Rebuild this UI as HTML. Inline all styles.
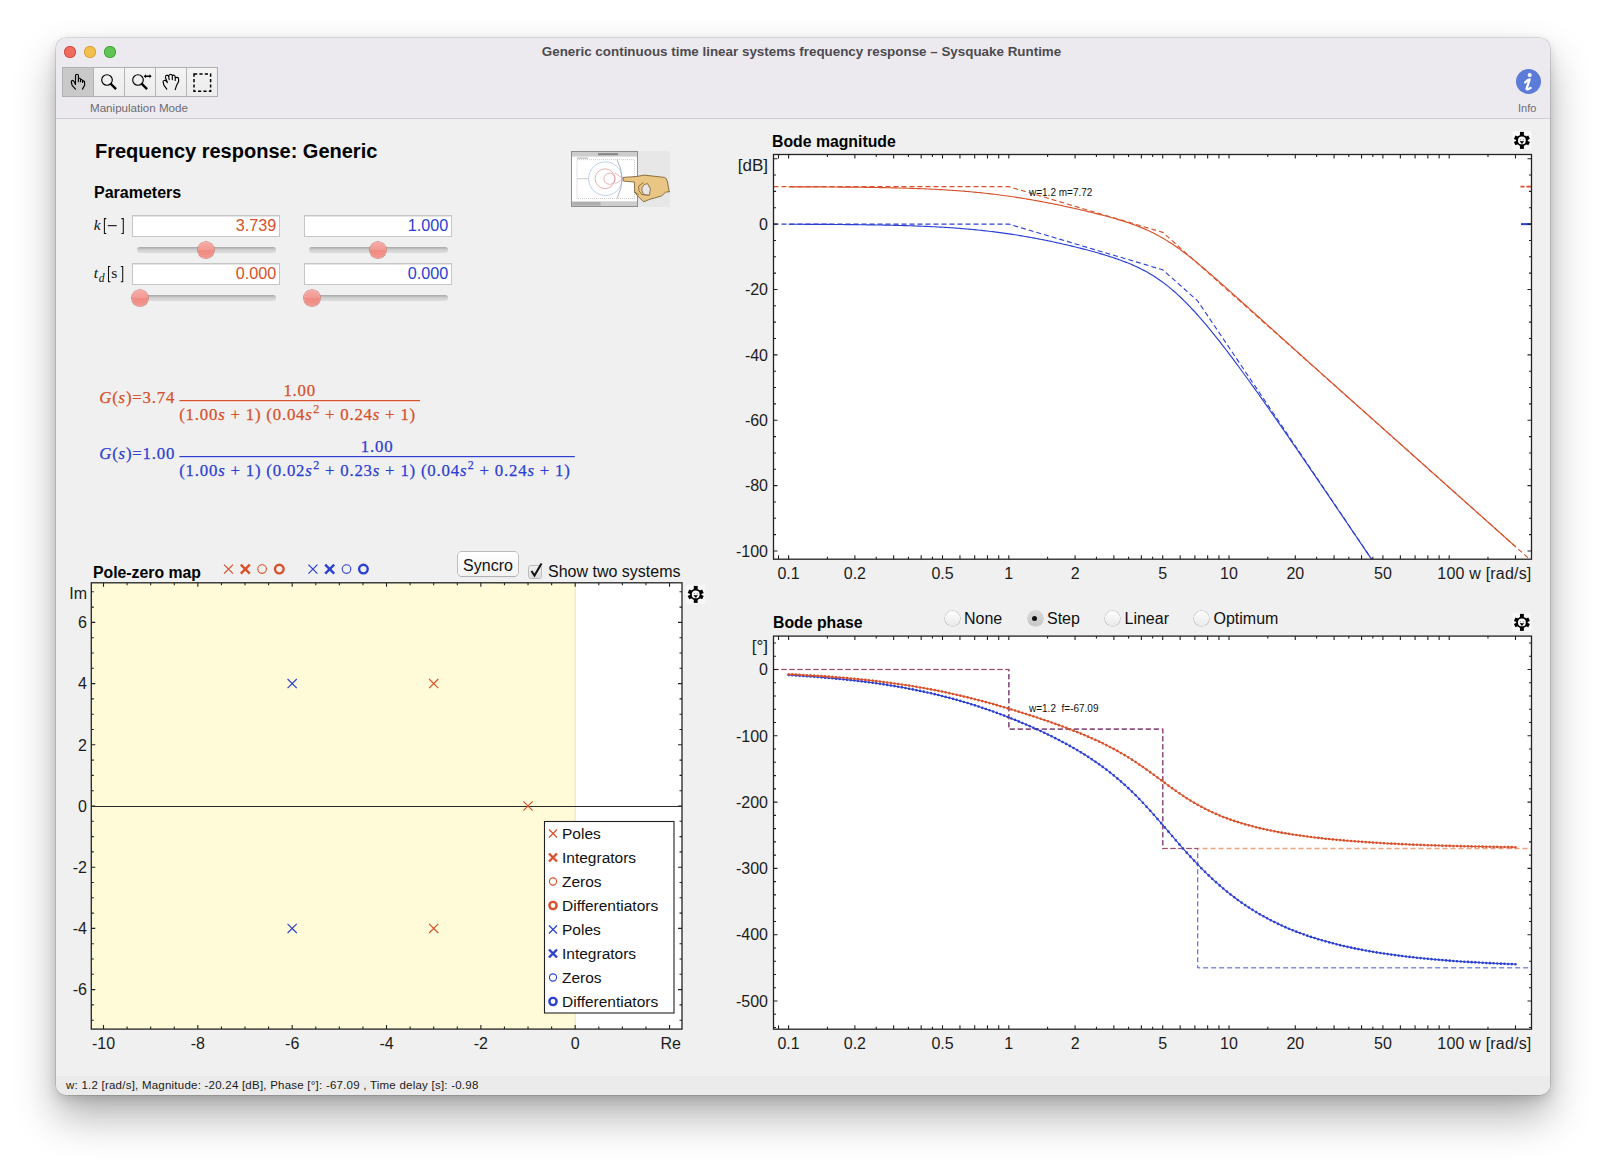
<!DOCTYPE html>
<html><head><meta charset="utf-8"><style>
html,body{margin:0;padding:0}
body{width:1606px;height:1169px;position:relative;overflow:hidden;background:#fff;font-family:"Liberation Sans",sans-serif}
.a{position:absolute;white-space:nowrap}
#win{position:absolute;left:56px;top:38px;width:1494px;height:1057px;border-radius:10px;background:#f0f0f0;overflow:hidden;
 box-shadow:0 0 0 0.5px rgba(0,0,0,0.22),0 22px 42px rgba(0,0,0,0.30),0 6px 14px rgba(0,0,0,0.10),0 2px 10px rgba(0,0,0,0.06)}
#tb{position:absolute;left:0;top:0;width:1494px;height:80px;background:#eceaef;border-bottom:1px solid #cfcdd2}
#status{position:absolute;left:0;top:1037px;width:1494px;height:20px;background:#ebebeb;box-shadow:inset 0 1px 0 #f2f2f2}
.tl{position:absolute;top:8px;width:12px;height:12px;border-radius:50%}
.btn{position:absolute;top:30.2px;height:27.4px;width:30.1px;background:linear-gradient(#f4f4f4,#ececec);border-right:1px solid #b4b4b4}
.inp{position:absolute;height:20px;width:146px;background:#fff;border:1px solid #c6c6c6;box-shadow:inset 0 1px 0 #e4e4e4}
.inp span{position:absolute;right:2.8px;top:0.1px;font-size:16.2px;line-height:19px}
.trk{position:absolute;height:5.3px;border-radius:3px;background:linear-gradient(#a8a8a8 0,#b4b4b4 18%,#d0d0d0 45%,#dedede 100%)}
.knob{position:absolute;width:15.5px;height:15.5px;border-radius:50%;background:linear-gradient(#f7aaa5 0,#f39a94 48%,#ef8a82 52%,#f4968f 100%);box-shadow:0 0 0 0.8px #c98078}
.radio{position:absolute;top:611px;width:15px;height:15px;border-radius:50%;background:linear-gradient(#fdfdfd,#eaeaea);box-shadow:0 0 0 0.6px #b5b5b5}
.ser{font-family:"Liberation Serif",serif}
</style></head><body>
<div id="win">
 <div id="tb">
  <div class="tl" style="left:8px;background:#ee6b5e;box-shadow:inset 0 0 0 0.8px #c54a3f"></div>
  <div class="tl" style="left:28px;background:#f5bf4f;box-shadow:inset 0 0 0 0.8px #cf992f"></div>
  <div class="tl" style="left:48px;background:#5ec453;box-shadow:inset 0 0 0 0.8px #3f9a36"></div>
  <div class="a" style="left:-1.5px;width:1494px;top:5.8px;text-align:center;font-size:13.4px;font-weight:bold;color:#4c4a4f;line-height:16px">Generic continuous time linear systems frequency response – Sysquake Runtime</div>
  <div style="position:absolute;left:6px;top:29.2px;width:153.8px;height:27.4px;border:1px solid #b0b0b0;background:#ededed"></div>
  <div class="btn" style="left:7px;background:#c9c9c9"></div>
  <div class="btn" style="left:38.1px"></div>
  <div class="btn" style="left:69.2px"></div>
  <div class="btn" style="left:100.3px"></div>
  <div class="btn" style="left:131.4px;border-right:none;width:28.4px"></div>
  <div class="a" style="left:34px;top:63px;font-size:11.6px;color:#6c6a70;line-height:14px">Manipulation Mode</div>
  <div style="position:absolute;left:1459.6px;top:30.5px;width:25.8px;height:25.8px;border-radius:50%;background:#5b7bd8"></div>
  <svg class="a" style="left:1459.6px;top:30.5px" width="26" height="26" viewBox="1515.6 68.5 26 26"><circle cx="1529.3" cy="74.6" r="2.05" fill="#fff"/><path d="M1524.8 82 Q1527.2 79.2 1529.3 78.9 L1526.1 88.3 Q1526.8 89.8 1530.2 87.4" fill="none" stroke="#fff" stroke-width="2.3" stroke-linecap="round" stroke-linejoin="round"/></svg>
  <div class="a" style="left:1462px;top:64px;font-size:11px;color:#6c6a70;line-height:13px">Info</div>
 </div>
 <div id="status"><div class="a" style="left:10px;top:3px;font-size:11.5px;color:#1a1a1a;line-height:14px;letter-spacing:0.23px">w: 1.2 [rad/s], Magnitude: -20.24 [dB], Phase [°]: -67.09 , Time delay [s]: -0.98</div></div>
</div>
<!-- toolbar icons -->
<svg class="a" style="left:0;top:0" width="1606" height="169" viewBox="0 0 1606 169">
 <g fill="none" stroke="#000" stroke-width="1.15" stroke-linecap="round" stroke-linejoin="round">
  <path d="M75.5 84.5 V75.4 Q75.5 74.2 76.95 74.2 Q78.4 74.2 78.4 75.4 V81.7 M78.4 78.1 L80 78.3 Q80.5 78.6 80.5 79.5 V81.7 M80.5 79.3 L82.2 79.8 Q82.5 80.1 82.5 81 V82.4 M82.5 80.6 L84 81.1 Q84.6 81.5 84.6 82.6 V85.3 L82.5 89.1 M75.5 84.5 L74.3 82 Q73.3 80.4 72.6 80.4 Q71.2 80.6 71.3 81.8 L72.1 85.3 L75.5 89.1"/>
  <circle cx="107" cy="80" r="5.3"/>
  <path d="M110.3 83.4 L116.1 89.1" stroke-width="2.3" stroke-linecap="butt"/>
  <circle cx="138" cy="80" r="5.3"/>
  <path d="M141.3 83.4 L147.1 89.1" stroke-width="2.3" stroke-linecap="butt"/>
  <path d="M145.2 76.3 H150.2" stroke-width="1.5"/>
  <path transform="translate(0.8 0)" d="M166 89.1 L163.2 85.3 L162.3 82 Q162.2 80.7 163.2 80.5 Q164.8 80.2 165.8 81.5 L166.6 82.6 M166.4 82 L164.6 77.5 Q164.5 75.4 165.9 75.2 Q167.4 75.1 167.8 76.5 L168.4 79.6 M167.9 76.5 Q168.2 74.2 169.9 74.2 Q171.5 74.3 171.5 76 V79.6 M171.5 75.8 Q172.2 74.9 173.3 75.3 Q174.4 75.8 174.4 77 V80.5 M174.4 78 Q175.5 77.2 176.6 77.4 Q177.8 77.8 177.8 79.2 V81.5 L175.6 85.8 L174.4 89.6"/>
 </g>
 <path d="M143.8 76.3 L146 74.3 V78.3 Z M151.6 76.3 L149.4 74.3 V78.3 Z" fill="#000"/>
 <rect x="194" y="74" width="16.6" height="17.2" fill="none" stroke="#000" stroke-width="1.5" stroke-dasharray="3.2 2.2"/>
</svg>
<!-- main content -->
<div class="a" style="left:95px;top:140px;font-size:20px;font-weight:bold;color:#000;line-height:22px">Frequency response: Generic</div>
<div class="a" style="left:94px;top:184.4px;font-size:16px;font-weight:bold;color:#000;line-height:18px">Parameters</div>
<svg class="a" style="left:0;top:200px" width="140" height="100" viewBox="0 200 140 100" font-family="Liberation Serif, serif" fill="#111">
 <text x="93.8" y="229.8" font-size="15.5" font-style="italic">k</text>
 <path d="M106.3 218.6 H104.4 V233.4 H106.3 M121.4 218.6 H123.3 V233.4 H121.4" fill="none" stroke="#111" stroke-width="1.05"/>
 <rect x="107.8" y="225.1" width="8.9" height="1.1"/>
 <text x="93.8" y="277.8" font-size="15.5" font-style="italic">t</text>
 <text x="98.8" y="282.4" font-size="11.7" font-style="italic">d</text>
 <path d="M110.4 266.5 H108.5 V281.7 H110.4 M120.8 266.5 H122.7 V281.7 H120.8" fill="none" stroke="#111" stroke-width="1.05"/>
 <text x="111.3" y="277.8" font-size="15.5">s</text>
</svg>

<div class="inp" style="left:132px;top:215px"><span style="color:#d9502b">3.739</span></div>
<div class="inp" style="left:304px;top:215px"><span style="color:#2b3fd3">1.000</span></div>
<div class="inp" style="left:132px;top:263px"><span style="color:#d9502b">0.000</span></div>
<div class="inp" style="left:304px;top:263px"><span style="color:#2b3fd3">0.000</span></div>
<div class="trk" style="left:137px;top:247.4px;width:139px"></div>
<div class="trk" style="left:309px;top:247.4px;width:139px"></div>
<div class="trk" style="left:137px;top:295.4px;width:139px"></div>
<div class="trk" style="left:309px;top:295.4px;width:139px"></div>
<div class="knob" style="left:198px;top:242.2px"></div>
<div class="knob" style="left:370px;top:242.2px"></div>
<div class="knob" style="left:132px;top:290.2px"></div>
<div class="knob" style="left:304px;top:290.2px"></div>
<!-- thumbnail -->
<div class="a" style="left:637px;top:151px;width:33px;height:56px;background:#e7e7e7"></div>
<svg class="a" style="left:571px;top:151px" width="100" height="57" viewBox="0 0 100 57">
 <rect x="0.5" y="0.5" width="66" height="55" fill="#fff" stroke="#8e8e8e"/>
 <rect x="1" y="1" width="65" height="4.6" fill="#cdcdcd"/>
 <rect x="27" y="2.2" width="20" height="2" fill="#666" opacity="0.7"/>
 <rect x="1" y="50.3" width="65" height="4.7" fill="#cdcdcd"/>
 <rect x="1.5" y="51" width="28" height="3.5" fill="#9a9a9a" opacity="0.6"/>
 <rect x="6" y="8.6" width="57.5" height="39" fill="none" stroke="#9a9a9a" stroke-width="0.5" stroke-dasharray="1 1"/>
 <rect x="6" y="6.5" width="11" height="1.2" fill="#888" opacity="0.6"/>
 <path d="M6 27.7 H17.5" stroke="#aaa" stroke-width="0.6"/>
 <circle cx="34.4" cy="27.7" r="16.8" fill="none" stroke="#a9c6e6" stroke-width="0.8"/>
 <path d="M46 8.6 Q56 27.7 46 47.5" fill="none" stroke="#8c97a8" stroke-width="0.7"/>
 <circle cx="34" cy="27.7" r="9.9" fill="none" stroke="#e39aa0" stroke-width="0.8"/>
 <circle cx="38.5" cy="27.7" r="5.6" fill="none" stroke="#e39aa0" stroke-width="0.8"/>
 <path d="M44 22 L52 27.7 L44 33" fill="none" stroke="#e39aa0" stroke-width="0.7"/>
 <path d="M52.2 26.4 L66.2 25.4 L73.2 24.1 L93.4 26.4 L95.1 27.5 L96.5 31 L97.9 39.3 L98.6 40.7 L94.8 41.1 L90.6 44.9 L83.6 47 L78.4 48.4 L72.8 50.8 L66.5 44.9 L63.7 41.1 L63.4 31 L52.6 30.2 Q51.8 28.3 52.2 26.4 Z" fill="#e9c684" stroke="#6a4e1e" stroke-width="0.75" stroke-linejoin="round"/>
 <path d="M72.5 31.6 L67.6 35.1 L67.9 39.7 L70.7 43.5 L78 44.2 M63.7 41.1 L67.9 43.5" fill="none" stroke="#6a4e1e" stroke-width="0.7"/>
 <path d="M71 36.5 L73.5 33.4 L76.6 32.7 L79.4 37.9 L78.4 44.2 L72.5 43.5 L71 39.7 Z" fill="#e6e6e6" stroke="#6a4e1e" stroke-width="0.7"/>
</svg>
<!-- equations -->
<!-- headers -->
<div class="a" style="left:93px;top:563.6px;font-size:15.8px;font-weight:bold;color:#000;line-height:18px">Pole-zero map</div>
<div class="a" style="left:772px;top:132.5px;font-size:15.8px;font-weight:bold;color:#000;line-height:18px">Bode magnitude</div>
<div class="a" style="left:773px;top:613.5px;font-size:15.8px;font-weight:bold;color:#000;line-height:18px">Bode phase</div>
<div class="a" style="left:457.5px;top:552px;width:60px;height:24px;border-radius:4px;background:linear-gradient(#ffffff,#f3f3f3);box-shadow:0 0 0 0.7px #aaa,0 0.5px 1px rgba(0,0,0,0.2)"></div>
<div class="a" style="left:457.5px;width:61px;top:556.7px;text-align:center;font-size:16px;color:#111;line-height:18px">Syncro</div>
<div class="a" style="left:529px;top:566px;width:12px;height:12px;border-radius:2px;background:linear-gradient(#f0f0f0,#dcdcdc);box-shadow:0 0 0 0.7px #a8a8a8"></div>
<svg class="a" style="left:526px;top:559px" width="20" height="20"><path d="M5.5 12 L8.5 16.5 L15.5 4.5" fill="none" stroke="#111" stroke-width="2"/></svg>
<div class="a" style="left:548px;top:563.2px;font-size:16px;color:#111;line-height:18px">Show two systems</div>
<div class="radio" style="left:944.5px"></div>
<div class="radio" style="left:1027.5px;background:linear-gradient(#dadada,#c8c8c8)"></div>
<div class="a" style="left:1032.4px;top:616.4px;width:5px;height:5px;border-radius:50%;background:#111"></div>
<div class="radio" style="left:1104.5px"></div>
<div class="radio" style="left:1193.5px"></div>
<div class="a" style="left:964px;top:610.3px;font-size:16px;color:#111;line-height:18px">None</div>
<div class="a" style="left:1047px;top:610.3px;font-size:16px;color:#111;line-height:18px">Step</div>
<div class="a" style="left:1124.5px;top:610.3px;font-size:16px;color:#111;line-height:18px">Linear</div>
<div class="a" style="left:1213.5px;top:610.3px;font-size:16px;color:#111;line-height:18px">Optimum</div>
<svg class="a" style="left:0;top:0" width="1606" height="1169" viewBox="0 0 1606 1169" font-family="Liberation Sans, sans-serif">
<rect x="773.5" y="154.5" width="758.0" height="404.70000000000005" fill="#fff"/>
<rect x="773.5" y="636.1" width="758.0" height="393.1" fill="#fff"/>
<rect x="91.3" y="582.8" width="590.7" height="446.29999999999995" fill="#fff"/>
<rect x="91.3" y="582.8" width="483.90000000000003" height="446.29999999999995" fill="#fffbd8"/>
<line x1="575.2" y1="582.8" x2="575.2" y2="1029.1" stroke="#e8e4c0" stroke-width="1"/>
<defs><clipPath id="cm"><rect x="773.5" y="154.5" width="758.0" height="404.70000000000005"/></clipPath><clipPath id="cp"><rect x="773.5" y="636.1" width="758.0" height="393.1"/></clipPath></defs>
<g clip-path="url(#cm)" fill="none">
<path d="M788.6 224.24 L790.42 224.25 L792.24 224.25 L794.07 224.26 L795.89 224.26 L797.71 224.27 L799.53 224.28 L801.35 224.28 L803.17 224.29 L805 224.3 L806.82 224.3 L808.64 224.31 L810.46 224.32 L812.28 224.33 L814.1 224.34 L815.93 224.35 L817.75 224.36 L819.57 224.37 L821.39 224.38 L823.21 224.39 L825.04 224.4 L826.86 224.41 L828.68 224.42 L830.5 224.43 L832.32 224.45 L834.14 224.46 L835.97 224.47 L837.79 224.49 L839.61 224.5 L841.43 224.52 L843.25 224.54 L845.07 224.55 L846.9 224.57 L848.72 224.59 L850.54 224.61 L852.36 224.62 L854.18 224.64 L856.01 224.67 L857.83 224.69 L859.65 224.71 L861.47 224.73 L863.29 224.76 L865.11 224.78 L866.94 224.81 L868.76 224.83 L870.58 224.86 L872.4 224.89 L874.22 224.92 L876.05 224.95 L877.87 224.98 L879.69 225.02 L881.51 225.05 L883.33 225.09 L885.15 225.12 L886.98 225.16 L888.8 225.2 L890.62 225.24 L892.44 225.28 L894.26 225.33 L896.08 225.37 L897.91 225.42 L899.73 225.47 L901.55 225.52 L903.37 225.57 L905.19 225.63 L907.02 225.68 L908.84 225.74 L910.66 225.8 L912.48 225.86 L914.3 225.93 L916.12 225.99 L917.95 226.06 L919.77 226.13 L921.59 226.21 L923.41 226.28 L925.23 226.36 L927.05 226.44 L928.88 226.53 L930.7 226.61 L932.52 226.7 L934.34 226.79 L936.16 226.89 L937.99 226.99 L939.81 227.09 L941.63 227.19 L943.45 227.3 L945.27 227.41 L947.09 227.52 L948.92 227.64 L950.74 227.76 L952.56 227.89 L954.38 228.01 L956.2 228.15 L958.02 228.28 L959.85 228.42 L961.67 228.57 L963.49 228.71 L965.31 228.86 L967.13 229.02 L968.96 229.18 L970.78 229.35 L972.6 229.51 L974.42 229.69 L976.24 229.87 L978.06 230.05 L979.89 230.24 L981.71 230.43 L983.53 230.62 L985.35 230.82 L987.17 231.03 L988.99 231.24 L990.82 231.46 L992.64 231.68 L994.46 231.9 L996.28 232.13 L998.1 232.37 L999.93 232.61 L1001.75 232.86 L1003.57 233.11 L1005.39 233.36 L1007.21 233.62 L1009.03 233.89 L1010.86 234.16 L1012.68 234.44 L1014.5 234.72 L1016.32 235.01 L1018.14 235.3 L1019.96 235.6 L1021.79 235.9 L1023.61 236.2 L1025.43 236.52 L1027.25 236.83 L1029.07 237.16 L1030.9 237.48 L1032.72 237.82 L1034.54 238.15 L1036.36 238.5 L1038.18 238.84 L1040 239.2 L1041.83 239.55 L1043.65 239.91 L1045.47 240.28 L1047.29 240.65 L1049.11 241.03 L1050.94 241.41 L1052.76 241.79 L1054.58 242.19 L1056.4 242.58 L1058.22 242.98 L1060.04 243.38 L1061.87 243.79 L1063.69 244.21 L1065.51 244.63 L1067.33 245.05 L1069.15 245.48 L1070.97 245.91 L1072.8 246.35 L1074.62 246.79 L1076.44 247.24 L1078.26 247.69 L1080.08 248.15 L1081.91 248.61 L1083.73 249.08 L1085.55 249.56 L1087.37 250.04 L1089.19 250.52 L1091.01 251.02 L1092.84 251.52 L1094.66 252.02 L1096.48 252.54 L1098.3 253.06 L1100.12 253.59 L1101.94 254.12 L1103.77 254.67 L1105.59 255.22 L1107.41 255.79 L1109.23 256.36 L1111.05 256.95 L1112.88 257.55 L1114.7 258.16 L1116.52 258.78 L1118.34 259.41 L1120.16 260.07 L1121.98 260.73 L1123.81 261.42 L1125.63 262.12 L1127.45 262.84 L1129.27 263.58 L1131.09 264.34 L1132.91 265.13 L1134.74 265.93 L1136.56 266.77 L1138.38 267.62 L1140.2 268.51 L1142.02 269.43 L1143.85 270.37 L1145.67 271.35 L1147.49 272.36 L1149.31 273.4 L1151.13 274.48 L1152.95 275.59 L1154.78 276.74 L1156.6 277.93 L1158.42 279.16 L1160.24 280.43 L1162.06 281.74 L1163.88 283.09 L1165.71 284.47 L1167.53 285.9 L1169.35 287.37 L1171.17 288.88 L1172.99 290.44 L1174.82 292.03 L1176.64 293.66 L1178.46 295.33 L1180.28 297.03 L1182.1 298.78 L1183.92 300.56 L1185.75 302.38 L1187.57 304.23 L1189.39 306.12 L1191.21 308.04 L1193.03 309.99 L1194.86 311.98 L1196.68 313.99 L1198.5 316.03 L1200.32 318.1 L1202.14 320.2 L1203.96 322.33 L1205.79 324.47 L1207.61 326.65 L1209.43 328.84 L1211.25 331.06 L1213.07 333.3 L1214.89 335.57 L1216.72 337.85 L1218.54 340.15 L1220.36 342.47 L1222.18 344.8 L1224 347.16 L1225.83 349.52 L1227.65 351.91 L1229.47 354.31 L1231.29 356.72 L1233.11 359.15 L1234.93 361.59 L1236.76 364.04 L1238.58 366.51 L1240.4 368.99 L1242.22 371.47 L1244.04 373.97 L1245.86 376.48 L1247.69 379 L1249.51 381.52 L1251.33 384.06 L1253.15 386.6 L1254.97 389.15 L1256.8 391.71 L1258.62 394.27 L1260.44 396.85 L1262.26 399.42 L1264.08 402.01 L1265.9 404.6 L1267.73 407.19 L1269.55 409.79 L1271.37 412.4 L1273.19 415.01 L1275.01 417.63 L1276.83 420.25 L1278.66 422.87 L1280.48 425.5 L1282.3 428.13 L1284.12 430.76 L1285.94 433.4 L1287.77 436.04 L1289.59 438.68 L1291.41 441.33 L1293.23 443.98 L1295.05 446.63 L1296.87 449.29 L1298.7 451.94 L1300.52 454.6 L1302.34 457.26 L1304.16 459.93 L1305.98 462.59 L1307.8 465.26 L1309.63 467.93 L1311.45 470.6 L1313.27 473.27 L1315.09 475.94 L1316.91 478.62 L1318.74 481.29 L1320.56 483.97 L1322.38 486.65 L1324.2 489.33 L1326.02 492.01 L1327.84 494.69 L1329.67 497.37 L1331.49 500.05 L1333.31 502.74 L1335.13 505.42 L1336.95 508.11 L1338.77 510.8 L1340.6 513.49 L1342.42 516.17 L1344.24 518.86 L1346.06 521.55 L1347.88 524.24 L1349.71 526.93 L1351.53 529.63 L1353.35 532.32 L1355.17 535.01 L1356.99 537.7 L1358.81 540.4 L1360.64 543.09 L1362.46 545.78 L1364.28 548.48 L1366.1 551.17 L1367.92 553.87 L1369.75 556.57 L1371.57 559.26 L1373.39 561.96 L1375.21 564.66 L1377.03 567.35 L1378.85 570.05 L1380.68 572.75 L1382.5 575.45 L1384.32 578.15 L1386.14 580.84 L1387.96 583.54 L1389.78 586.24 L1391.61 588.94 L1393.43 591.64 L1395.25 594.34 L1397.07 597.04 L1398.89 599.74 L1400.72 602.44 L1402.54 605.14 L1404.36 607.84 L1406.18 610.54 L1408 613.24 L1409.82 615.94 L1411.65 618.64 L1413.47 621.35 L1415.29 624.05 L1417.11 626.75 L1418.93 629.45 L1420.75 632.15 L1422.58 634.85 L1424.4 637.56 L1426.22 640.26 L1428.04 642.96 L1429.86 645.66 L1431.69 648.36 L1433.51 651.07 L1435.33 653.77 L1437.15 656.47 L1438.97 659.17 L1440.79 661.88 L1442.62 664.58 L1444.44 667.28 L1446.26 669.99 L1448.08 672.69 L1449.9 675.39 L1451.72 678.1 L1453.55 680.8 L1455.37 683.5 L1457.19 686.2 L1459.01 688.91 L1460.83 691.61 L1462.66 694.31 L1464.48 697.02 L1466.3 699.72 L1468.12 702.43 L1469.94 705.13 L1471.76 707.83 L1473.59 710.54 L1475.41 713.24 L1477.23 715.94 L1479.05 718.65 L1480.87 721.35 L1482.69 724.05 L1484.52 726.76 L1486.34 729.46 L1488.16 732.17 L1489.98 734.87 L1491.8 737.57 L1493.63 740.28 L1495.45 742.98 L1497.27 745.69 L1499.09 748.39 L1500.91 751.09 L1502.73 753.8 L1504.56 756.5 L1506.38 759.21 L1508.2 761.91 L1510.02 764.61 L1511.84 767.32 L1513.67 770.02 L1515.49 772.73" stroke="#2b3fd3" stroke-width="1.15"/>
<path d="M788.6 186.79 L790.42 186.8 L792.24 186.8 L794.07 186.81 L795.89 186.81 L797.71 186.82 L799.53 186.83 L801.35 186.83 L803.17 186.84 L805 186.85 L806.82 186.85 L808.64 186.86 L810.46 186.87 L812.28 186.88 L814.1 186.89 L815.93 186.9 L817.75 186.91 L819.57 186.92 L821.39 186.93 L823.21 186.94 L825.04 186.95 L826.86 186.96 L828.68 186.97 L830.5 186.98 L832.32 187 L834.14 187.01 L835.97 187.02 L837.79 187.04 L839.61 187.05 L841.43 187.07 L843.25 187.08 L845.07 187.1 L846.9 187.12 L848.72 187.13 L850.54 187.15 L852.36 187.17 L854.18 187.19 L856.01 187.21 L857.83 187.23 L859.65 187.25 L861.47 187.28 L863.29 187.3 L865.11 187.32 L866.94 187.35 L868.76 187.38 L870.58 187.4 L872.4 187.43 L874.22 187.46 L876.05 187.49 L877.87 187.52 L879.69 187.56 L881.51 187.59 L883.33 187.62 L885.15 187.66 L886.98 187.7 L888.8 187.74 L890.62 187.78 L892.44 187.82 L894.26 187.86 L896.08 187.91 L897.91 187.95 L899.73 188 L901.55 188.05 L903.37 188.1 L905.19 188.16 L907.02 188.21 L908.84 188.27 L910.66 188.33 L912.48 188.39 L914.3 188.45 L916.12 188.52 L917.95 188.58 L919.77 188.65 L921.59 188.73 L923.41 188.8 L925.23 188.88 L927.05 188.96 L928.88 189.04 L930.7 189.12 L932.52 189.21 L934.34 189.3 L936.16 189.39 L937.99 189.49 L939.81 189.59 L941.63 189.69 L943.45 189.8 L945.27 189.91 L947.09 190.02 L948.92 190.13 L950.74 190.25 L952.56 190.37 L954.38 190.5 L956.2 190.63 L958.02 190.76 L959.85 190.9 L961.67 191.04 L963.49 191.18 L965.31 191.33 L967.13 191.49 L968.96 191.64 L970.78 191.8 L972.6 191.97 L974.42 192.14 L976.24 192.31 L978.06 192.49 L979.89 192.67 L981.71 192.86 L983.53 193.05 L985.35 193.25 L987.17 193.45 L988.99 193.65 L990.82 193.86 L992.64 194.08 L994.46 194.3 L996.28 194.52 L998.1 194.75 L999.93 194.99 L1001.75 195.23 L1003.57 195.47 L1005.39 195.72 L1007.21 195.97 L1009.03 196.23 L1010.86 196.49 L1012.68 196.76 L1014.5 197.03 L1016.32 197.31 L1018.14 197.59 L1019.96 197.88 L1021.79 198.17 L1023.61 198.47 L1025.43 198.77 L1027.25 199.07 L1029.07 199.38 L1030.9 199.69 L1032.72 200.01 L1034.54 200.34 L1036.36 200.66 L1038.18 201 L1040 201.33 L1041.83 201.67 L1043.65 202.02 L1045.47 202.37 L1047.29 202.72 L1049.11 203.07 L1050.94 203.43 L1052.76 203.8 L1054.58 204.17 L1056.4 204.54 L1058.22 204.91 L1060.04 205.29 L1061.87 205.68 L1063.69 206.06 L1065.51 206.45 L1067.33 206.85 L1069.15 207.25 L1070.97 207.65 L1072.8 208.05 L1074.62 208.46 L1076.44 208.87 L1078.26 209.28 L1080.08 209.7 L1081.91 210.13 L1083.73 210.55 L1085.55 210.98 L1087.37 211.41 L1089.19 211.85 L1091.01 212.29 L1092.84 212.74 L1094.66 213.19 L1096.48 213.65 L1098.3 214.11 L1100.12 214.57 L1101.94 215.04 L1103.77 215.52 L1105.59 216 L1107.41 216.49 L1109.23 216.99 L1111.05 217.49 L1112.88 218 L1114.7 218.52 L1116.52 219.05 L1118.34 219.59 L1120.16 220.14 L1121.98 220.7 L1123.81 221.27 L1125.63 221.86 L1127.45 222.46 L1129.27 223.07 L1131.09 223.7 L1132.91 224.34 L1134.74 225.01 L1136.56 225.69 L1138.38 226.39 L1140.2 227.11 L1142.02 227.85 L1143.85 228.62 L1145.67 229.41 L1147.49 230.22 L1149.31 231.06 L1151.13 231.93 L1152.95 232.82 L1154.78 233.74 L1156.6 234.69 L1158.42 235.67 L1160.24 236.67 L1162.06 237.71 L1163.88 238.77 L1165.71 239.87 L1167.53 240.99 L1169.35 242.14 L1171.17 243.33 L1172.99 244.53 L1174.82 245.77 L1176.64 247.03 L1178.46 248.32 L1180.28 249.63 L1182.1 250.97 L1183.92 252.33 L1185.75 253.71 L1187.57 255.11 L1189.39 256.54 L1191.21 257.98 L1193.03 259.43 L1194.86 260.91 L1196.68 262.39 L1198.5 263.9 L1200.32 265.41 L1202.14 266.94 L1203.96 268.48 L1205.79 270.03 L1207.61 271.59 L1209.43 273.16 L1211.25 274.74 L1213.07 276.32 L1214.89 277.91 L1216.72 279.51 L1218.54 281.11 L1220.36 282.72 L1222.18 284.33 L1224 285.94 L1225.83 287.56 L1227.65 289.18 L1229.47 290.81 L1231.29 292.44 L1233.11 294.07 L1234.93 295.7 L1236.76 297.34 L1238.58 298.97 L1240.4 300.61 L1242.22 302.25 L1244.04 303.88 L1245.86 305.52 L1247.69 307.17 L1249.51 308.81 L1251.33 310.45 L1253.15 312.09 L1254.97 313.73 L1256.8 315.37 L1258.62 317.02 L1260.44 318.66 L1262.26 320.3 L1264.08 321.94 L1265.9 323.58 L1267.73 325.23 L1269.55 326.87 L1271.37 328.51 L1273.19 330.15 L1275.01 331.79 L1276.83 333.43 L1278.66 335.07 L1280.48 336.71 L1282.3 338.35 L1284.12 339.99 L1285.94 341.63 L1287.77 343.27 L1289.59 344.9 L1291.41 346.54 L1293.23 348.18 L1295.05 349.82 L1296.87 351.45 L1298.7 353.09 L1300.52 354.72 L1302.34 356.36 L1304.16 357.99 L1305.98 359.63 L1307.8 361.26 L1309.63 362.9 L1311.45 364.53 L1313.27 366.16 L1315.09 367.8 L1316.91 369.43 L1318.74 371.06 L1320.56 372.69 L1322.38 374.33 L1324.2 375.96 L1326.02 377.59 L1327.84 379.22 L1329.67 380.85 L1331.49 382.48 L1333.31 384.11 L1335.13 385.74 L1336.95 387.37 L1338.77 389 L1340.6 390.63 L1342.42 392.26 L1344.24 393.88 L1346.06 395.51 L1347.88 397.14 L1349.71 398.77 L1351.53 400.4 L1353.35 402.03 L1355.17 403.65 L1356.99 405.28 L1358.81 406.91 L1360.64 408.53 L1362.46 410.16 L1364.28 411.79 L1366.1 413.41 L1367.92 415.04 L1369.75 416.67 L1371.57 418.29 L1373.39 419.92 L1375.21 421.55 L1377.03 423.17 L1378.85 424.8 L1380.68 426.42 L1382.5 428.05 L1384.32 429.67 L1386.14 431.3 L1387.96 432.92 L1389.78 434.55 L1391.61 436.17 L1393.43 437.8 L1395.25 439.42 L1397.07 441.05 L1398.89 442.67 L1400.72 444.3 L1402.54 445.92 L1404.36 447.55 L1406.18 449.17 L1408 450.8 L1409.82 452.42 L1411.65 454.04 L1413.47 455.67 L1415.29 457.29 L1417.11 458.92 L1418.93 460.54 L1420.75 462.17 L1422.58 463.79 L1424.4 465.41 L1426.22 467.04 L1428.04 468.66 L1429.86 470.28 L1431.69 471.91 L1433.51 473.53 L1435.33 475.16 L1437.15 476.78 L1438.97 478.4 L1440.79 480.03 L1442.62 481.65 L1444.44 483.27 L1446.26 484.9 L1448.08 486.52 L1449.9 488.14 L1451.72 489.77 L1453.55 491.39 L1455.37 493.01 L1457.19 494.64 L1459.01 496.26 L1460.83 497.88 L1462.66 499.51 L1464.48 501.13 L1466.3 502.75 L1468.12 504.38 L1469.94 506 L1471.76 507.62 L1473.59 509.25 L1475.41 510.87 L1477.23 512.49 L1479.05 514.12 L1480.87 515.74 L1482.69 517.36 L1484.52 518.98 L1486.34 520.61 L1488.16 522.23 L1489.98 523.85 L1491.8 525.48 L1493.63 527.1 L1495.45 528.72 L1497.27 530.35 L1499.09 531.97 L1500.91 533.59 L1502.73 535.21 L1504.56 536.84 L1506.38 538.46 L1508.2 540.08 L1510.02 541.71 L1511.84 543.33 L1513.67 544.95 L1515.49 546.58" stroke="#d9502b" stroke-width="1.15"/>
<path d="M773.5 224.1 L1008.8 224.1 L1162.71 269.8 L1197.73 300.99 L1531.5 796.49" stroke="#2b3fd3" stroke-width="1.1" stroke-dasharray="5 3"/>
<path d="M773.5 186.65 L1008.8 186.65 L1162.71 232.35 L1531.5 560.84" stroke="#d9502b" stroke-width="1.1" stroke-dasharray="5 3"/>
</g>
<path d="M1520.5 186.65 h4 M1526.5 186.65 h4.5" stroke="#d9502b" stroke-width="1.8"/>
<path d="M1521 224.1 h10" stroke="#2b3fd3" stroke-width="2"/>
<text x="1029" y="195.6" font-size="10" fill="#111">w=1.2 m=7.72</text>
<g clip-path="url(#cp)" fill="none">
<path d="M773.5 669.5 L1008.8 669.5 L1008.8 729.17 L1162.71 729.17 L1162.71 848.51 L1531.5 848.51" stroke="#ef9f80" stroke-width="1.35" stroke-dasharray="5 3"/>
<path d="M773.5 669.5 L1008.8 669.5 L1008.8 729.17 L1162.71 729.17 L1162.71 848.51 L1197.73 848.51 L1197.73 967.85 L1531.5 967.85" stroke="#3f55cf" stroke-width="1.0" stroke-dasharray="5 3"/>
<path d="M773.5 669.5 L1008.8 669.5 L1008.8 729.17 L1162.71 729.17 L1162.71 848.51 L1197.73 848.51" stroke="#9a4f78" stroke-width="1.2" stroke-dasharray="5 3"/>
<path d="M788.6 675.07 L792.25 675.29 L795.91 675.51 L799.56 675.75 L803.21 675.99 L806.86 676.24 L810.52 676.5 L814.17 676.77 L817.82 677.05 L821.47 677.34 L825.13 677.65 L828.78 677.96 L832.43 678.29 L836.09 678.63 L839.74 678.98 L843.39 679.34 L847.04 679.72 L850.7 680.11 L854.35 680.52 L858 680.94 L861.65 681.37 L865.31 681.83 L868.96 682.3 L872.61 682.78 L876.26 683.29 L879.92 683.81 L883.57 684.35 L887.22 684.91 L890.88 685.49 L894.53 686.09 L898.18 686.71 L901.83 687.35 L905.49 688.01 L909.14 688.7 L912.79 689.41 L916.44 690.14 L920.1 690.89 L923.75 691.67 L927.4 692.48 L931.06 693.31 L934.71 694.16 L938.36 695.05 L942.01 695.95 L945.67 696.89 L949.32 697.85 L952.97 698.84 L956.62 699.85 L960.28 700.9 L963.93 701.97 L967.58 703.07 L971.23 704.2 L974.89 705.35 L978.54 706.53 L982.19 707.74 L985.85 708.98 L989.5 710.25 L993.15 711.55 L996.8 712.87 L1000.46 714.22 L1004.11 715.6 L1007.76 717.01 L1011.41 718.45 L1015.07 719.92 L1018.72 721.41 L1022.37 722.94 L1026.03 724.49 L1029.68 726.08 L1033.33 727.7 L1036.98 729.35 L1040.64 731.03 L1044.29 732.75 L1047.94 734.51 L1051.59 736.3 L1055.25 738.14 L1058.9 740.01 L1062.55 741.93 L1066.21 743.9 L1069.86 745.91 L1073.51 747.98 L1077.16 750.11 L1080.82 752.29 L1084.47 754.54 L1088.12 756.85 L1091.77 759.24 L1095.43 761.71 L1099.08 764.25 L1102.73 766.89 L1106.38 769.61 L1110.04 772.43 L1113.69 775.35 L1117.34 778.38 L1121 781.52 L1124.65 784.77 L1128.3 788.14 L1131.95 791.62 L1135.61 795.22 L1139.26 798.93 L1142.91 802.75 L1146.56 806.68 L1150.22 810.69 L1153.87 814.79 L1157.52 818.95 L1161.18 823.16 L1164.83 827.41 L1168.48 831.67 L1172.13 835.93 L1175.79 840.18 L1179.44 844.38 L1183.09 848.54 L1186.74 852.63 L1190.4 856.65 L1194.05 860.59 L1197.7 864.44 L1201.35 868.19 L1205.01 871.84 L1208.66 875.39 L1212.31 878.83 L1215.97 882.17 L1219.62 885.4 L1223.27 888.53 L1226.92 891.55 L1230.58 894.46 L1234.23 897.27 L1237.88 899.98 L1241.53 902.6 L1245.19 905.11 L1248.84 907.53 L1252.49 909.86 L1256.15 912.1 L1259.8 914.25 L1263.45 916.32 L1267.1 918.31 L1270.76 920.22 L1274.41 922.06 L1278.06 923.83 L1281.71 925.52 L1285.37 927.15 L1289.02 928.71 L1292.67 930.21 L1296.32 931.66 L1299.98 933.04 L1303.63 934.37 L1307.28 935.65 L1310.94 936.88 L1314.59 938.06 L1318.24 939.2 L1321.89 940.29 L1325.55 941.34 L1329.2 942.35 L1332.85 943.31 L1336.5 944.24 L1340.16 945.14 L1343.81 946 L1347.46 946.83 L1351.12 947.62 L1354.77 948.39 L1358.42 949.12 L1362.07 949.83 L1365.73 950.51 L1369.38 951.16 L1373.03 951.79 L1376.68 952.4 L1380.34 952.98 L1383.99 953.54 L1387.64 954.08 L1391.3 954.6 L1394.95 955.1 L1398.6 955.58 L1402.25 956.04 L1405.91 956.48 L1409.56 956.91 L1413.21 957.32 L1416.86 957.72 L1420.52 958.1 L1424.17 958.46 L1427.82 958.82 L1431.47 959.15 L1435.13 959.48 L1438.78 959.8 L1442.43 960.1 L1446.09 960.39 L1449.74 960.67 L1453.39 960.94 L1457.04 961.2 L1460.7 961.45 L1464.35 961.69 L1468 961.92 L1471.65 962.14 L1475.31 962.35 L1478.96 962.56 L1482.61 962.76 L1486.27 962.95 L1489.92 963.13 L1493.57 963.31 L1497.22 963.48 L1500.88 963.64 L1504.53 963.8 L1508.18 963.95 L1511.83 964.1 L1515.49 964.24" stroke="#2b3fd3" stroke-width="1.05"/><path d="M788.6 675.07h0M792.25 675.29h0M795.91 675.51h0M799.56 675.75h0M803.21 675.99h0M806.86 676.24h0M810.52 676.5h0M814.17 676.77h0M817.82 677.05h0M821.47 677.34h0M825.13 677.65h0M828.78 677.96h0M832.43 678.29h0M836.09 678.63h0M839.74 678.98h0M843.39 679.34h0M847.04 679.72h0M850.7 680.11h0M854.35 680.52h0M858 680.94h0M861.65 681.37h0M865.31 681.83h0M868.96 682.3h0M872.61 682.78h0M876.26 683.29h0M879.92 683.81h0M883.57 684.35h0M887.22 684.91h0M890.88 685.49h0M894.53 686.09h0M898.18 686.71h0M901.83 687.35h0M905.49 688.01h0M909.14 688.7h0M912.79 689.41h0M916.44 690.14h0M920.1 690.89h0M923.75 691.67h0M927.4 692.48h0M931.06 693.31h0M934.71 694.16h0M938.36 695.05h0M942.01 695.95h0M945.67 696.89h0M949.32 697.85h0M952.97 698.84h0M956.62 699.85h0M960.28 700.9h0M963.93 701.97h0M967.58 703.07h0M971.23 704.2h0M974.89 705.35h0M978.54 706.53h0M982.19 707.74h0M985.85 708.98h0M989.5 710.25h0M993.15 711.55h0M996.8 712.87h0M1000.46 714.22h0M1004.11 715.6h0M1007.76 717.01h0M1011.41 718.45h0M1015.07 719.92h0M1018.72 721.41h0M1022.37 722.94h0M1026.03 724.49h0M1029.68 726.08h0M1033.33 727.7h0M1036.98 729.35h0M1040.64 731.03h0M1044.29 732.75h0M1047.94 734.51h0M1051.59 736.3h0M1055.25 738.14h0M1058.9 740.01h0M1062.55 741.93h0M1066.21 743.9h0M1069.86 745.91h0M1073.51 747.98h0M1077.16 750.11h0M1080.82 752.29h0M1084.47 754.54h0M1088.12 756.85h0M1091.77 759.24h0M1095.43 761.71h0M1099.08 764.25h0M1102.73 766.89h0M1106.38 769.61h0M1110.04 772.43h0M1113.69 775.35h0M1117.34 778.38h0M1121 781.52h0M1124.65 784.77h0M1128.3 788.14h0M1131.95 791.62h0M1135.61 795.22h0M1139.26 798.93h0M1142.91 802.75h0M1146.56 806.68h0M1150.22 810.69h0M1153.87 814.79h0M1157.52 818.95h0M1161.18 823.16h0M1164.83 827.41h0M1168.48 831.67h0M1172.13 835.93h0M1175.79 840.18h0M1179.44 844.38h0M1183.09 848.54h0M1186.74 852.63h0M1190.4 856.65h0M1194.05 860.59h0M1197.7 864.44h0M1201.35 868.19h0M1205.01 871.84h0M1208.66 875.39h0M1212.31 878.83h0M1215.97 882.17h0M1219.62 885.4h0M1223.27 888.53h0M1226.92 891.55h0M1230.58 894.46h0M1234.23 897.27h0M1237.88 899.98h0M1241.53 902.6h0M1245.19 905.11h0M1248.84 907.53h0M1252.49 909.86h0M1256.15 912.1h0M1259.8 914.25h0M1263.45 916.32h0M1267.1 918.31h0M1270.76 920.22h0M1274.41 922.06h0M1278.06 923.83h0M1281.71 925.52h0M1285.37 927.15h0M1289.02 928.71h0M1292.67 930.21h0M1296.32 931.66h0M1299.98 933.04h0M1303.63 934.37h0M1307.28 935.65h0M1310.94 936.88h0M1314.59 938.06h0M1318.24 939.2h0M1321.89 940.29h0M1325.55 941.34h0M1329.2 942.35h0M1332.85 943.31h0M1336.5 944.24h0M1340.16 945.14h0M1343.81 946h0M1347.46 946.83h0M1351.12 947.62h0M1354.77 948.39h0M1358.42 949.12h0M1362.07 949.83h0M1365.73 950.51h0M1369.38 951.16h0M1373.03 951.79h0M1376.68 952.4h0M1380.34 952.98h0M1383.99 953.54h0M1387.64 954.08h0M1391.3 954.6h0M1394.95 955.1h0M1398.6 955.58h0M1402.25 956.04h0M1405.91 956.48h0M1409.56 956.91h0M1413.21 957.32h0M1416.86 957.72h0M1420.52 958.1h0M1424.17 958.46h0M1427.82 958.82h0M1431.47 959.15h0M1435.13 959.48h0M1438.78 959.8h0M1442.43 960.1h0M1446.09 960.39h0M1449.74 960.67h0M1453.39 960.94h0M1457.04 961.2h0M1460.7 961.45h0M1464.35 961.69h0M1468 961.92h0M1471.65 962.14h0M1475.31 962.35h0M1478.96 962.56h0M1482.61 962.76h0M1486.27 962.95h0M1489.92 963.13h0M1493.57 963.31h0M1497.22 963.48h0M1500.88 963.64h0M1504.53 963.8h0M1508.18 963.95h0M1511.83 964.1h0M1515.49 964.24h0" stroke="#2b3fd3" stroke-width="2.6" stroke-linecap="round"/>
<path d="M788.6 674.2 L792.25 674.38 L795.91 674.57 L799.56 674.76 L803.21 674.97 L806.86 675.18 L810.52 675.4 L814.17 675.63 L817.82 675.86 L821.47 676.11 L825.13 676.36 L828.78 676.63 L832.43 676.9 L836.09 677.18 L839.74 677.48 L843.39 677.79 L847.04 678.1 L850.7 678.43 L854.35 678.77 L858 679.13 L861.65 679.49 L865.31 679.87 L868.96 680.26 L872.61 680.67 L876.26 681.09 L879.92 681.53 L883.57 681.98 L887.22 682.45 L890.88 682.93 L894.53 683.43 L898.18 683.95 L901.83 684.48 L905.49 685.03 L909.14 685.6 L912.79 686.19 L916.44 686.8 L920.1 687.43 L923.75 688.07 L927.4 688.73 L931.06 689.42 L934.71 690.12 L938.36 690.85 L942.01 691.59 L945.67 692.36 L949.32 693.14 L952.97 693.95 L956.62 694.77 L960.28 695.62 L963.93 696.48 L967.58 697.37 L971.23 698.27 L974.89 699.2 L978.54 700.14 L982.19 701.1 L985.85 702.08 L989.5 703.08 L993.15 704.1 L996.8 705.13 L1000.46 706.18 L1004.11 707.25 L1007.76 708.33 L1011.41 709.43 L1015.07 710.54 L1018.72 711.67 L1022.37 712.82 L1026.03 713.98 L1029.68 715.15 L1033.33 716.34 L1036.98 717.55 L1040.64 718.77 L1044.29 720.01 L1047.94 721.27 L1051.59 722.55 L1055.25 723.84 L1058.9 725.16 L1062.55 726.49 L1066.21 727.86 L1069.86 729.24 L1073.51 730.66 L1077.16 732.1 L1080.82 733.58 L1084.47 735.1 L1088.12 736.65 L1091.77 738.25 L1095.43 739.89 L1099.08 741.58 L1102.73 743.33 L1106.38 745.13 L1110.04 746.99 L1113.69 748.92 L1117.34 750.92 L1121 752.99 L1124.65 755.13 L1128.3 757.35 L1131.95 759.65 L1135.61 762.02 L1139.26 764.46 L1142.91 766.97 L1146.56 769.54 L1150.22 772.16 L1153.87 774.82 L1157.52 777.51 L1161.18 780.21 L1164.83 782.9 L1168.48 785.58 L1172.13 788.22 L1175.79 790.81 L1179.44 793.35 L1183.09 795.81 L1186.74 798.19 L1190.4 800.48 L1194.05 802.68 L1197.7 804.78 L1201.35 806.79 L1205.01 808.7 L1208.66 810.52 L1212.31 812.25 L1215.97 813.89 L1219.62 815.45 L1223.27 816.93 L1226.92 818.33 L1230.58 819.66 L1234.23 820.92 L1237.88 822.11 L1241.53 823.25 L1245.19 824.33 L1248.84 825.35 L1252.49 826.32 L1256.15 827.25 L1259.8 828.13 L1263.45 828.97 L1267.1 829.78 L1270.76 830.54 L1274.41 831.27 L1278.06 831.96 L1281.71 832.63 L1285.37 833.26 L1289.02 833.87 L1292.67 834.45 L1296.32 835 L1299.98 835.53 L1303.63 836.04 L1307.28 836.53 L1310.94 837 L1314.59 837.44 L1318.24 837.87 L1321.89 838.28 L1325.55 838.68 L1329.2 839.06 L1332.85 839.42 L1336.5 839.77 L1340.16 840.1 L1343.81 840.42 L1347.46 840.73 L1351.12 841.03 L1354.77 841.31 L1358.42 841.59 L1362.07 841.85 L1365.73 842.1 L1369.38 842.35 L1373.03 842.58 L1376.68 842.81 L1380.34 843.02 L1383.99 843.23 L1387.64 843.43 L1391.3 843.62 L1394.95 843.8 L1398.6 843.98 L1402.25 844.15 L1405.91 844.32 L1409.56 844.47 L1413.21 844.63 L1416.86 844.77 L1420.52 844.91 L1424.17 845.05 L1427.82 845.18 L1431.47 845.3 L1435.13 845.42 L1438.78 845.54 L1442.43 845.65 L1446.09 845.76 L1449.74 845.86 L1453.39 845.96 L1457.04 846.06 L1460.7 846.15 L1464.35 846.24 L1468 846.32 L1471.65 846.41 L1475.31 846.48 L1478.96 846.56 L1482.61 846.63 L1486.27 846.7 L1489.92 846.77 L1493.57 846.84 L1497.22 846.9 L1500.88 846.96 L1504.53 847.02 L1508.18 847.07 L1511.83 847.13 L1515.49 847.18" stroke="#d9502b" stroke-width="1.05"/><path d="M788.6 674.2h0M792.25 674.38h0M795.91 674.57h0M799.56 674.76h0M803.21 674.97h0M806.86 675.18h0M810.52 675.4h0M814.17 675.63h0M817.82 675.86h0M821.47 676.11h0M825.13 676.36h0M828.78 676.63h0M832.43 676.9h0M836.09 677.18h0M839.74 677.48h0M843.39 677.79h0M847.04 678.1h0M850.7 678.43h0M854.35 678.77h0M858 679.13h0M861.65 679.49h0M865.31 679.87h0M868.96 680.26h0M872.61 680.67h0M876.26 681.09h0M879.92 681.53h0M883.57 681.98h0M887.22 682.45h0M890.88 682.93h0M894.53 683.43h0M898.18 683.95h0M901.83 684.48h0M905.49 685.03h0M909.14 685.6h0M912.79 686.19h0M916.44 686.8h0M920.1 687.43h0M923.75 688.07h0M927.4 688.73h0M931.06 689.42h0M934.71 690.12h0M938.36 690.85h0M942.01 691.59h0M945.67 692.36h0M949.32 693.14h0M952.97 693.95h0M956.62 694.77h0M960.28 695.62h0M963.93 696.48h0M967.58 697.37h0M971.23 698.27h0M974.89 699.2h0M978.54 700.14h0M982.19 701.1h0M985.85 702.08h0M989.5 703.08h0M993.15 704.1h0M996.8 705.13h0M1000.46 706.18h0M1004.11 707.25h0M1007.76 708.33h0M1011.41 709.43h0M1015.07 710.54h0M1018.72 711.67h0M1022.37 712.82h0M1026.03 713.98h0M1029.68 715.15h0M1033.33 716.34h0M1036.98 717.55h0M1040.64 718.77h0M1044.29 720.01h0M1047.94 721.27h0M1051.59 722.55h0M1055.25 723.84h0M1058.9 725.16h0M1062.55 726.49h0M1066.21 727.86h0M1069.86 729.24h0M1073.51 730.66h0M1077.16 732.1h0M1080.82 733.58h0M1084.47 735.1h0M1088.12 736.65h0M1091.77 738.25h0M1095.43 739.89h0M1099.08 741.58h0M1102.73 743.33h0M1106.38 745.13h0M1110.04 746.99h0M1113.69 748.92h0M1117.34 750.92h0M1121 752.99h0M1124.65 755.13h0M1128.3 757.35h0M1131.95 759.65h0M1135.61 762.02h0M1139.26 764.46h0M1142.91 766.97h0M1146.56 769.54h0M1150.22 772.16h0M1153.87 774.82h0M1157.52 777.51h0M1161.18 780.21h0M1164.83 782.9h0M1168.48 785.58h0M1172.13 788.22h0M1175.79 790.81h0M1179.44 793.35h0M1183.09 795.81h0M1186.74 798.19h0M1190.4 800.48h0M1194.05 802.68h0M1197.7 804.78h0M1201.35 806.79h0M1205.01 808.7h0M1208.66 810.52h0M1212.31 812.25h0M1215.97 813.89h0M1219.62 815.45h0M1223.27 816.93h0M1226.92 818.33h0M1230.58 819.66h0M1234.23 820.92h0M1237.88 822.11h0M1241.53 823.25h0M1245.19 824.33h0M1248.84 825.35h0M1252.49 826.32h0M1256.15 827.25h0M1259.8 828.13h0M1263.45 828.97h0M1267.1 829.78h0M1270.76 830.54h0M1274.41 831.27h0M1278.06 831.96h0M1281.71 832.63h0M1285.37 833.26h0M1289.02 833.87h0M1292.67 834.45h0M1296.32 835h0M1299.98 835.53h0M1303.63 836.04h0M1307.28 836.53h0M1310.94 837h0M1314.59 837.44h0M1318.24 837.87h0M1321.89 838.28h0M1325.55 838.68h0M1329.2 839.06h0M1332.85 839.42h0M1336.5 839.77h0M1340.16 840.1h0M1343.81 840.42h0M1347.46 840.73h0M1351.12 841.03h0M1354.77 841.31h0M1358.42 841.59h0M1362.07 841.85h0M1365.73 842.1h0M1369.38 842.35h0M1373.03 842.58h0M1376.68 842.81h0M1380.34 843.02h0M1383.99 843.23h0M1387.64 843.43h0M1391.3 843.62h0M1394.95 843.8h0M1398.6 843.98h0M1402.25 844.15h0M1405.91 844.32h0M1409.56 844.47h0M1413.21 844.63h0M1416.86 844.77h0M1420.52 844.91h0M1424.17 845.05h0M1427.82 845.18h0M1431.47 845.3h0M1435.13 845.42h0M1438.78 845.54h0M1442.43 845.65h0M1446.09 845.76h0M1449.74 845.86h0M1453.39 845.96h0M1457.04 846.06h0M1460.7 846.15h0M1464.35 846.24h0M1468 846.32h0M1471.65 846.41h0M1475.31 846.48h0M1478.96 846.56h0M1482.61 846.63h0M1486.27 846.7h0M1489.92 846.77h0M1493.57 846.84h0M1497.22 846.9h0M1500.88 846.96h0M1504.53 847.02h0M1508.18 847.07h0M1511.83 847.13h0M1515.49 847.18h0" stroke="#d9502b" stroke-width="2.6" stroke-linecap="round"/>
</g>
<text x="1029" y="711.5" font-size="10" fill="#111">w=1.2 &#160;f=-67.09</text>
<rect x="773.5" y="154.5" width="758" height="404.7" fill="none" stroke="#222" stroke-width="1.3"/>
<rect x="773.5" y="636.1" width="758" height="393.1" fill="none" stroke="#222" stroke-width="1.3"/>
<rect x="91.3" y="582.8" width="590.7" height="446.3" fill="none" stroke="#222" stroke-width="1.3"/>
<path d="M778.52 154.5 v4 M778.52 559.2 v-4 M788.6 154.5 v4 M788.6 559.2 v-4 M854.89 154.5 v4 M854.89 559.2 v-4 M893.66 154.5 v4 M893.66 559.2 v-4 M921.17 154.5 v4 M921.17 559.2 v-4 M942.51 154.5 v4 M942.51 559.2 v-4 M959.95 154.5 v4 M959.95 559.2 v-4 M974.69 154.5 v4 M974.69 559.2 v-4 M987.46 154.5 v4 M987.46 559.2 v-4 M998.72 154.5 v4 M998.72 559.2 v-4 M827.38 154.5 v2.5 M827.38 559.2 v-2.5 M876.23 154.5 v2.5 M876.23 559.2 v-2.5 M908.4 154.5 v2.5 M908.4 559.2 v-2.5 M932.44 154.5 v2.5 M932.44 559.2 v-2.5 M1008.8 154.5 v4 M1008.8 559.2 v-4 M1075.09 154.5 v4 M1075.09 559.2 v-4 M1113.86 154.5 v4 M1113.86 559.2 v-4 M1141.37 154.5 v4 M1141.37 559.2 v-4 M1162.71 154.5 v4 M1162.71 559.2 v-4 M1180.15 154.5 v4 M1180.15 559.2 v-4 M1194.89 154.5 v4 M1194.89 559.2 v-4 M1207.66 154.5 v4 M1207.66 559.2 v-4 M1218.92 154.5 v4 M1218.92 559.2 v-4 M1047.58 154.5 v2.5 M1047.58 559.2 v-2.5 M1096.43 154.5 v2.5 M1096.43 559.2 v-2.5 M1128.6 154.5 v2.5 M1128.6 559.2 v-2.5 M1152.64 154.5 v2.5 M1152.64 559.2 v-2.5 M1229 154.5 v4 M1229 559.2 v-4 M1295.29 154.5 v4 M1295.29 559.2 v-4 M1334.06 154.5 v4 M1334.06 559.2 v-4 M1361.57 154.5 v4 M1361.57 559.2 v-4 M1382.91 154.5 v4 M1382.91 559.2 v-4 M1400.35 154.5 v4 M1400.35 559.2 v-4 M1415.09 154.5 v4 M1415.09 559.2 v-4 M1427.86 154.5 v4 M1427.86 559.2 v-4 M1439.12 154.5 v4 M1439.12 559.2 v-4 M1267.78 154.5 v2.5 M1267.78 559.2 v-2.5 M1316.63 154.5 v2.5 M1316.63 559.2 v-2.5 M1348.8 154.5 v2.5 M1348.8 559.2 v-2.5 M1372.84 154.5 v2.5 M1372.84 559.2 v-2.5 M1449.2 154.5 v4 M1449.2 559.2 v-4 M1515.49 154.5 v4 M1515.49 559.2 v-4 M1487.98 154.5 v2.5 M1487.98 559.2 v-2.5 M778.52 154.5 v2.5 M778.52 559.2 v-2.5 M778.52 636.1 v4 M778.52 1029.2 v-4 M788.6 636.1 v4 M788.6 1029.2 v-4 M854.89 636.1 v4 M854.89 1029.2 v-4 M893.66 636.1 v4 M893.66 1029.2 v-4 M921.17 636.1 v4 M921.17 1029.2 v-4 M942.51 636.1 v4 M942.51 1029.2 v-4 M959.95 636.1 v4 M959.95 1029.2 v-4 M974.69 636.1 v4 M974.69 1029.2 v-4 M987.46 636.1 v4 M987.46 1029.2 v-4 M998.72 636.1 v4 M998.72 1029.2 v-4 M827.38 636.1 v2.5 M827.38 1029.2 v-2.5 M876.23 636.1 v2.5 M876.23 1029.2 v-2.5 M908.4 636.1 v2.5 M908.4 1029.2 v-2.5 M932.44 636.1 v2.5 M932.44 1029.2 v-2.5 M1008.8 636.1 v4 M1008.8 1029.2 v-4 M1075.09 636.1 v4 M1075.09 1029.2 v-4 M1113.86 636.1 v4 M1113.86 1029.2 v-4 M1141.37 636.1 v4 M1141.37 1029.2 v-4 M1162.71 636.1 v4 M1162.71 1029.2 v-4 M1180.15 636.1 v4 M1180.15 1029.2 v-4 M1194.89 636.1 v4 M1194.89 1029.2 v-4 M1207.66 636.1 v4 M1207.66 1029.2 v-4 M1218.92 636.1 v4 M1218.92 1029.2 v-4 M1047.58 636.1 v2.5 M1047.58 1029.2 v-2.5 M1096.43 636.1 v2.5 M1096.43 1029.2 v-2.5 M1128.6 636.1 v2.5 M1128.6 1029.2 v-2.5 M1152.64 636.1 v2.5 M1152.64 1029.2 v-2.5 M1229 636.1 v4 M1229 1029.2 v-4 M1295.29 636.1 v4 M1295.29 1029.2 v-4 M1334.06 636.1 v4 M1334.06 1029.2 v-4 M1361.57 636.1 v4 M1361.57 1029.2 v-4 M1382.91 636.1 v4 M1382.91 1029.2 v-4 M1400.35 636.1 v4 M1400.35 1029.2 v-4 M1415.09 636.1 v4 M1415.09 1029.2 v-4 M1427.86 636.1 v4 M1427.86 1029.2 v-4 M1439.12 636.1 v4 M1439.12 1029.2 v-4 M1267.78 636.1 v2.5 M1267.78 1029.2 v-2.5 M1316.63 636.1 v2.5 M1316.63 1029.2 v-2.5 M1348.8 636.1 v2.5 M1348.8 1029.2 v-2.5 M1372.84 636.1 v2.5 M1372.84 1029.2 v-2.5 M1449.2 636.1 v4 M1449.2 1029.2 v-4 M1515.49 636.1 v4 M1515.49 1029.2 v-4 M1487.98 636.1 v2.5 M1487.98 1029.2 v-2.5 M778.52 636.1 v2.5 M778.52 1029.2 v-2.5 M773.5 551 h4 M1531.5 551 h-4 M773.5 534.65 h2.5 M1531.5 534.65 h-2.5 M773.5 518.31 h2.5 M1531.5 518.31 h-2.5 M773.5 501.97 h2.5 M1531.5 501.97 h-2.5 M773.5 485.62 h4 M1531.5 485.62 h-4 M773.5 469.27 h2.5 M1531.5 469.27 h-2.5 M773.5 452.93 h2.5 M1531.5 452.93 h-2.5 M773.5 436.59 h2.5 M1531.5 436.59 h-2.5 M773.5 420.24 h4 M1531.5 420.24 h-4 M773.5 403.89 h2.5 M1531.5 403.89 h-2.5 M773.5 387.55 h2.5 M1531.5 387.55 h-2.5 M773.5 371.21 h2.5 M1531.5 371.21 h-2.5 M773.5 354.86 h4 M1531.5 354.86 h-4 M773.5 338.51 h2.5 M1531.5 338.51 h-2.5 M773.5 322.17 h2.5 M1531.5 322.17 h-2.5 M773.5 305.82 h2.5 M1531.5 305.82 h-2.5 M773.5 289.48 h4 M1531.5 289.48 h-4 M773.5 273.13 h2.5 M1531.5 273.13 h-2.5 M773.5 256.79 h2.5 M1531.5 256.79 h-2.5 M773.5 240.44 h2.5 M1531.5 240.44 h-2.5 M773.5 224.1 h4 M1531.5 224.1 h-4 M773.5 207.75 h2.5 M1531.5 207.75 h-2.5 M773.5 191.41 h2.5 M1531.5 191.41 h-2.5 M773.5 175.06 h2.5 M1531.5 175.06 h-2.5 M773.5 158.72 h4 M1531.5 158.72 h-4 M773.5 1027.52 h2.5 M1531.5 1027.52 h-2.5 M773.5 1014.26 h2.5 M1531.5 1014.26 h-2.5 M773.5 1001 h4 M1531.5 1001 h-4 M773.5 987.74 h2.5 M1531.5 987.74 h-2.5 M773.5 974.48 h2.5 M1531.5 974.48 h-2.5 M773.5 961.22 h2.5 M1531.5 961.22 h-2.5 M773.5 947.96 h2.5 M1531.5 947.96 h-2.5 M773.5 934.7 h4 M1531.5 934.7 h-4 M773.5 921.44 h2.5 M1531.5 921.44 h-2.5 M773.5 908.18 h2.5 M1531.5 908.18 h-2.5 M773.5 894.92 h2.5 M1531.5 894.92 h-2.5 M773.5 881.66 h2.5 M1531.5 881.66 h-2.5 M773.5 868.4 h4 M1531.5 868.4 h-4 M773.5 855.14 h2.5 M1531.5 855.14 h-2.5 M773.5 841.88 h2.5 M1531.5 841.88 h-2.5 M773.5 828.62 h2.5 M1531.5 828.62 h-2.5 M773.5 815.36 h2.5 M1531.5 815.36 h-2.5 M773.5 802.1 h4 M1531.5 802.1 h-4 M773.5 788.84 h2.5 M1531.5 788.84 h-2.5 M773.5 775.58 h2.5 M1531.5 775.58 h-2.5 M773.5 762.32 h2.5 M1531.5 762.32 h-2.5 M773.5 749.06 h2.5 M1531.5 749.06 h-2.5 M773.5 735.8 h4 M1531.5 735.8 h-4 M773.5 722.54 h2.5 M1531.5 722.54 h-2.5 M773.5 709.28 h2.5 M1531.5 709.28 h-2.5 M773.5 696.02 h2.5 M1531.5 696.02 h-2.5 M773.5 682.76 h2.5 M1531.5 682.76 h-2.5 M773.5 669.5 h4 M1531.5 669.5 h-4 M773.5 656.24 h2.5 M1531.5 656.24 h-2.5 M773.5 642.98 h2.5 M1531.5 642.98 h-2.5 M103.5 582.8 v4 M103.5 1029.1 v-4 M127.09 582.8 v2.5 M127.09 1029.1 v-2.5 M150.67 582.8 v2.5 M150.67 1029.1 v-2.5 M174.26 582.8 v2.5 M174.26 1029.1 v-2.5 M197.84 582.8 v4 M197.84 1029.1 v-4 M221.43 582.8 v2.5 M221.43 1029.1 v-2.5 M245.01 582.8 v2.5 M245.01 1029.1 v-2.5 M268.6 582.8 v2.5 M268.6 1029.1 v-2.5 M292.18 582.8 v4 M292.18 1029.1 v-4 M315.77 582.8 v2.5 M315.77 1029.1 v-2.5 M339.35 582.8 v2.5 M339.35 1029.1 v-2.5 M362.94 582.8 v2.5 M362.94 1029.1 v-2.5 M386.52 582.8 v4 M386.52 1029.1 v-4 M410.11 582.8 v2.5 M410.11 1029.1 v-2.5 M433.69 582.8 v2.5 M433.69 1029.1 v-2.5 M457.28 582.8 v2.5 M457.28 1029.1 v-2.5 M480.86 582.8 v4 M480.86 1029.1 v-4 M504.45 582.8 v2.5 M504.45 1029.1 v-2.5 M528.03 582.8 v2.5 M528.03 1029.1 v-2.5 M551.62 582.8 v2.5 M551.62 1029.1 v-2.5 M575.2 582.8 v4 M575.2 1029.1 v-4 M598.79 582.8 v2.5 M598.79 1029.1 v-2.5 M622.37 582.8 v2.5 M622.37 1029.1 v-2.5 M645.96 582.8 v2.5 M645.96 1029.1 v-2.5 M669.54 582.8 v4 M669.54 1029.1 v-4 M91.3 1020.2 h2.5 M682 1020.2 h-2.5 M91.3 1004.9 h2.5 M682 1004.9 h-2.5 M91.3 989.6 h4 M682 989.6 h-4 M91.3 974.3 h2.5 M682 974.3 h-2.5 M91.3 959 h2.5 M682 959 h-2.5 M91.3 943.7 h2.5 M682 943.7 h-2.5 M91.3 928.4 h4 M682 928.4 h-4 M91.3 913.1 h2.5 M682 913.1 h-2.5 M91.3 897.8 h2.5 M682 897.8 h-2.5 M91.3 882.5 h2.5 M682 882.5 h-2.5 M91.3 867.2 h4 M682 867.2 h-4 M91.3 851.9 h2.5 M682 851.9 h-2.5 M91.3 836.6 h2.5 M682 836.6 h-2.5 M91.3 821.3 h2.5 M682 821.3 h-2.5 M91.3 806 h4 M682 806 h-4 M91.3 790.7 h2.5 M682 790.7 h-2.5 M91.3 775.4 h2.5 M682 775.4 h-2.5 M91.3 760.1 h2.5 M682 760.1 h-2.5 M91.3 744.8 h4 M682 744.8 h-4 M91.3 729.5 h2.5 M682 729.5 h-2.5 M91.3 714.2 h2.5 M682 714.2 h-2.5 M91.3 698.9 h2.5 M682 698.9 h-2.5 M91.3 683.6 h4 M682 683.6 h-4 M91.3 668.3 h2.5 M682 668.3 h-2.5 M91.3 653 h2.5 M682 653 h-2.5 M91.3 637.7 h2.5 M682 637.7 h-2.5 M91.3 622.4 h4 M682 622.4 h-4 M91.3 607.1 h2.5 M682 607.1 h-2.5 M91.3 591.8 h2.5 M682 591.8 h-2.5 " stroke="#222" stroke-width="1.1" fill="none"/>
<line x1="91.3" y1="806.5" x2="682.0" y2="806.5" stroke="#2a2a2a" stroke-width="1"/>
<text x="788.6" y="579" text-anchor="middle" font-size="16" fill="#1c1c1c" >0.1</text>
<text x="788.6" y="1049" text-anchor="middle" font-size="16" fill="#1c1c1c" >0.1</text>
<text x="854.89" y="579" text-anchor="middle" font-size="16" fill="#1c1c1c" >0.2</text>
<text x="854.89" y="1049" text-anchor="middle" font-size="16" fill="#1c1c1c" >0.2</text>
<text x="942.51" y="579" text-anchor="middle" font-size="16" fill="#1c1c1c" >0.5</text>
<text x="942.51" y="1049" text-anchor="middle" font-size="16" fill="#1c1c1c" >0.5</text>
<text x="1008.8" y="579" text-anchor="middle" font-size="16" fill="#1c1c1c" >1</text>
<text x="1008.8" y="1049" text-anchor="middle" font-size="16" fill="#1c1c1c" >1</text>
<text x="1075.09" y="579" text-anchor="middle" font-size="16" fill="#1c1c1c" >2</text>
<text x="1075.09" y="1049" text-anchor="middle" font-size="16" fill="#1c1c1c" >2</text>
<text x="1162.71" y="579" text-anchor="middle" font-size="16" fill="#1c1c1c" >5</text>
<text x="1162.71" y="1049" text-anchor="middle" font-size="16" fill="#1c1c1c" >5</text>
<text x="1229" y="579" text-anchor="middle" font-size="16" fill="#1c1c1c" >10</text>
<text x="1229" y="1049" text-anchor="middle" font-size="16" fill="#1c1c1c" >10</text>
<text x="1295.29" y="579" text-anchor="middle" font-size="16" fill="#1c1c1c" >20</text>
<text x="1295.29" y="1049" text-anchor="middle" font-size="16" fill="#1c1c1c" >20</text>
<text x="1382.91" y="579" text-anchor="middle" font-size="16" fill="#1c1c1c" >50</text>
<text x="1382.91" y="1049" text-anchor="middle" font-size="16" fill="#1c1c1c" >50</text>
<text x="1531.5" y="579" text-anchor="end" font-size="16" fill="#1c1c1c" letter-spacing="0.2">100 w [rad/s]</text>
<text x="1531.5" y="1049" text-anchor="end" font-size="16" fill="#1c1c1c" letter-spacing="0.2">100 w [rad/s]</text>
<text x="768" y="171" text-anchor="end" font-size="17" fill="#1c1c1c" >[dB]</text>
<text x="768" y="229.8" text-anchor="end" font-size="16" fill="#1c1c1c" >0</text>
<text x="768" y="295.18" text-anchor="end" font-size="16" fill="#1c1c1c" >-20</text>
<text x="768" y="360.56" text-anchor="end" font-size="16" fill="#1c1c1c" >-40</text>
<text x="768" y="425.94" text-anchor="end" font-size="16" fill="#1c1c1c" >-60</text>
<text x="768" y="491.32" text-anchor="end" font-size="16" fill="#1c1c1c" >-80</text>
<text x="768" y="556.7" text-anchor="end" font-size="16" fill="#1c1c1c" >-100</text>
<text x="768" y="652" text-anchor="end" font-size="17" fill="#1c1c1c" >[°]</text>
<text x="768" y="675.2" text-anchor="end" font-size="16" fill="#1c1c1c" >0</text>
<text x="768" y="741.5" text-anchor="end" font-size="16" fill="#1c1c1c" >-100</text>
<text x="768" y="807.8" text-anchor="end" font-size="16" fill="#1c1c1c" >-200</text>
<text x="768" y="874.1" text-anchor="end" font-size="16" fill="#1c1c1c" >-300</text>
<text x="768" y="940.4" text-anchor="end" font-size="16" fill="#1c1c1c" >-400</text>
<text x="768" y="1006.7" text-anchor="end" font-size="16" fill="#1c1c1c" >-500</text>
<text x="87" y="599" text-anchor="end" font-size="16" fill="#1c1c1c" >Im</text>
<text x="87" y="628.1" text-anchor="end" font-size="16" fill="#1c1c1c" >6</text>
<text x="87" y="689.3" text-anchor="end" font-size="16" fill="#1c1c1c" >4</text>
<text x="87" y="750.5" text-anchor="end" font-size="16" fill="#1c1c1c" >2</text>
<text x="87" y="811.7" text-anchor="end" font-size="16" fill="#1c1c1c" >0</text>
<text x="87" y="872.9" text-anchor="end" font-size="16" fill="#1c1c1c" >-2</text>
<text x="87" y="934.1" text-anchor="end" font-size="16" fill="#1c1c1c" >-4</text>
<text x="87" y="995.3" text-anchor="end" font-size="16" fill="#1c1c1c" >-6</text>
<text x="103.5" y="1049" text-anchor="middle" font-size="16" fill="#1c1c1c" >-10</text>
<text x="197.84" y="1049" text-anchor="middle" font-size="16" fill="#1c1c1c" >-8</text>
<text x="292.18" y="1049" text-anchor="middle" font-size="16" fill="#1c1c1c" >-6</text>
<text x="386.52" y="1049" text-anchor="middle" font-size="16" fill="#1c1c1c" >-4</text>
<text x="480.86" y="1049" text-anchor="middle" font-size="16" fill="#1c1c1c" >-2</text>
<text x="575.2" y="1049" text-anchor="middle" font-size="16" fill="#1c1c1c" >0</text>
<text x="681" y="1049" text-anchor="end" font-size="16" fill="#1c1c1c" >Re</text>
<path d="M287.58 679 l9.2 9.2 M287.58 688.2 l9.2 -9.2" stroke="#2b3fd3" stroke-width="1.15" fill="none"/>
<path d="M287.58 923.8 l9.2 9.2 M287.58 933 l9.2 -9.2" stroke="#2b3fd3" stroke-width="1.15" fill="none"/>
<path d="M429.09 679 l9.2 9.2 M429.09 688.2 l9.2 -9.2" stroke="#d9502b" stroke-width="1.15" fill="none"/>
<path d="M429.09 923.8 l9.2 9.2 M429.09 933 l9.2 -9.2" stroke="#d9502b" stroke-width="1.15" fill="none"/>
<path d="M523.43 801.4 l9.2 9.2 M523.43 810.6 l9.2 -9.2" stroke="#d9502b" stroke-width="1.15" fill="none"/>
<path d="M224 564.6 l9.0 9.0 M224 573.6 l9.0 -9.0" stroke="#d9502b" stroke-width="1.2" fill="none"/>
<path d="M240.8 564.6 l9.0 9.0 M240.8 573.6 l9.0 -9.0" stroke="#d9502b" stroke-width="2.4" fill="none"/>
<circle cx="262.1" cy="569.1" r="4.3" stroke="#d9502b" stroke-width="1.1" fill="none"/>
<circle cx="279.3" cy="569.1" r="4.3" stroke="#d9502b" stroke-width="2.4" fill="none"/>
<path d="M308.4 564.6 l9.0 9.0 M308.4 573.6 l9.0 -9.0" stroke="#2b3fd3" stroke-width="1.2" fill="none"/>
<path d="M325.2 564.6 l9.0 9.0 M325.2 573.6 l9.0 -9.0" stroke="#2b3fd3" stroke-width="2.4" fill="none"/>
<circle cx="346.5" cy="569.1" r="4.3" stroke="#2b3fd3" stroke-width="1.1" fill="none"/>
<circle cx="363.4" cy="569.1" r="4.3" stroke="#2b3fd3" stroke-width="2.4" fill="none"/>
<rect x="544.5" y="821.5" width="129.5" height="191.5" fill="#fff" stroke="#222" stroke-width="1.1"/>
<path d="M549 829.5 l8 8 M549 837.5 l8 -8" stroke="#d9502b" stroke-width="1.2" fill="none"/>
<text x="562" y="839" font-size="15.5" fill="#111">Poles</text>
<path d="M549 853.5 l8 8 M549 861.5 l8 -8" stroke="#d9502b" stroke-width="2.4" fill="none"/>
<text x="562" y="863" font-size="15.5" fill="#111">Integrators</text>
<circle cx="553" cy="881.5" r="3.6" stroke="#d9502b" stroke-width="1.1" fill="none"/>
<text x="562" y="887" font-size="15.5" fill="#111">Zeros</text>
<circle cx="553" cy="905.5" r="3.6" stroke="#d9502b" stroke-width="2.4" fill="none"/>
<text x="562" y="911" font-size="15.5" fill="#111">Differentiators</text>
<path d="M549 925.5 l8 8 M549 933.5 l8 -8" stroke="#2b3fd3" stroke-width="1.2" fill="none"/>
<text x="562" y="935" font-size="15.5" fill="#111">Poles</text>
<path d="M549 949.5 l8 8 M549 957.5 l8 -8" stroke="#2b3fd3" stroke-width="2.4" fill="none"/>
<text x="562" y="959" font-size="15.5" fill="#111">Integrators</text>
<circle cx="553" cy="977.5" r="3.6" stroke="#2b3fd3" stroke-width="1.1" fill="none"/>
<text x="562" y="983" font-size="15.5" fill="#111">Zeros</text>
<circle cx="553" cy="1001.5" r="3.6" stroke="#2b3fd3" stroke-width="2.4" fill="none"/>
<text x="562" y="1007" font-size="15.5" fill="#111">Differentiators</text>
<g transform="translate(1521.9 140.4)"><rect x="-9.5" y="-9.5" width="19" height="19" fill="#fff" opacity="0.55"/><rect x="-1.95" y="-8.5" width="3.9" height="3.8" fill="#000" transform="rotate(0)"/><rect x="-1.95" y="-8.5" width="3.9" height="3.8" fill="#000" transform="rotate(180)"/><rect x="-1.9" y="-7.9" width="3.8" height="3.2" fill="#000" transform="rotate(66)"/><rect x="-1.9" y="-7.9" width="3.8" height="3.2" fill="#000" transform="rotate(114)"/><rect x="-1.9" y="-7.9" width="3.8" height="3.2" fill="#000" transform="rotate(246)"/><rect x="-1.9" y="-7.9" width="3.8" height="3.2" fill="#000" transform="rotate(294)"/><circle r="4.85" fill="none" stroke="#000" stroke-width="1.8"/><path d="M-2 0.4 Q0 1.4 2 0.4 Q1.9 2 0.8 2.3 L0.8 3.1 L-0.8 3.1 L-0.8 2.3 Q-1.9 2 -2 0.4 Z" fill="#000"/><circle cx="-1.4" cy="-0.9" r="0.55" fill="#999"/><circle cx="1.4" cy="-0.9" r="0.55" fill="#999"/></g>
<g transform="translate(1521.9 622.4)"><rect x="-9.5" y="-9.5" width="19" height="19" fill="#fff" opacity="0.55"/><rect x="-1.95" y="-8.5" width="3.9" height="3.8" fill="#000" transform="rotate(0)"/><rect x="-1.95" y="-8.5" width="3.9" height="3.8" fill="#000" transform="rotate(180)"/><rect x="-1.9" y="-7.9" width="3.8" height="3.2" fill="#000" transform="rotate(66)"/><rect x="-1.9" y="-7.9" width="3.8" height="3.2" fill="#000" transform="rotate(114)"/><rect x="-1.9" y="-7.9" width="3.8" height="3.2" fill="#000" transform="rotate(246)"/><rect x="-1.9" y="-7.9" width="3.8" height="3.2" fill="#000" transform="rotate(294)"/><circle r="4.85" fill="none" stroke="#000" stroke-width="1.8"/><path d="M-2 0.4 Q0 1.4 2 0.4 Q1.9 2 0.8 2.3 L0.8 3.1 L-0.8 3.1 L-0.8 2.3 Q-1.9 2 -2 0.4 Z" fill="#000"/><circle cx="-1.4" cy="-0.9" r="0.55" fill="#999"/><circle cx="1.4" cy="-0.9" r="0.55" fill="#999"/></g>
<g transform="translate(695.7 594.4)"><rect x="-9.5" y="-9.5" width="19" height="19" fill="#fff" opacity="0.55"/><rect x="-1.95" y="-8.5" width="3.9" height="3.8" fill="#000" transform="rotate(0)"/><rect x="-1.95" y="-8.5" width="3.9" height="3.8" fill="#000" transform="rotate(180)"/><rect x="-1.9" y="-7.9" width="3.8" height="3.2" fill="#000" transform="rotate(66)"/><rect x="-1.9" y="-7.9" width="3.8" height="3.2" fill="#000" transform="rotate(114)"/><rect x="-1.9" y="-7.9" width="3.8" height="3.2" fill="#000" transform="rotate(246)"/><rect x="-1.9" y="-7.9" width="3.8" height="3.2" fill="#000" transform="rotate(294)"/><circle r="4.85" fill="none" stroke="#000" stroke-width="1.8"/><path d="M-2 0.4 Q0 1.4 2 0.4 Q1.9 2 0.8 2.3 L0.8 3.1 L-0.8 3.1 L-0.8 2.3 Q-1.9 2 -2 0.4 Z" fill="#000"/><circle cx="-1.4" cy="-0.9" r="0.55" fill="#999"/><circle cx="1.4" cy="-0.9" r="0.55" fill="#999"/></g>
<g font-family="Liberation Serif, serif" font-size="16.8" fill="#d9502b" stroke="#d9502b" stroke-width="0.25" letter-spacing="0.8"><text x="99.3" y="403.4"><tspan font-style="italic">G</tspan>(<tspan font-style="italic">s</tspan>)=3.74</text><rect x="179.4" y="400" width="240.6" height="1.2" stroke="none"/><text x="299.7" y="396.2" text-anchor="middle">1.00</text><text x="179.2" y="419.7">(1.00<tspan font-style="italic">s</tspan> + 1) (0.04<tspan font-style="italic">s</tspan><tspan font-size="12" dy="-7" dx="0.5">2</tspan><tspan dy="7"> + 0.24<tspan font-style="italic">s</tspan> + 1)</tspan></text></g>
<g font-family="Liberation Serif, serif" font-size="16.8" fill="#2b3fd3" stroke="#2b3fd3" stroke-width="0.25" letter-spacing="0.8"><text x="99.3" y="459.4"><tspan font-style="italic">G</tspan>(<tspan font-style="italic">s</tspan>)=1.00</text><rect x="179.4" y="456" width="395.4" height="1.2" stroke="none"/><text x="377.1" y="452.2" text-anchor="middle">1.00</text><text x="179.2" y="475.7">(1.00<tspan font-style="italic">s</tspan> + 1) (0.02<tspan font-style="italic">s</tspan><tspan font-size="12" dy="-7" dx="0.5">2</tspan><tspan dy="7"> + 0.23<tspan font-style="italic">s</tspan> + 1)</tspan> (0.04<tspan font-style="italic">s</tspan><tspan font-size="12" dy="-7" dx="0.5">2</tspan><tspan dy="7"> + 0.24<tspan font-style="italic">s</tspan> + 1)</tspan></text></g>
</svg>
</body></html>
